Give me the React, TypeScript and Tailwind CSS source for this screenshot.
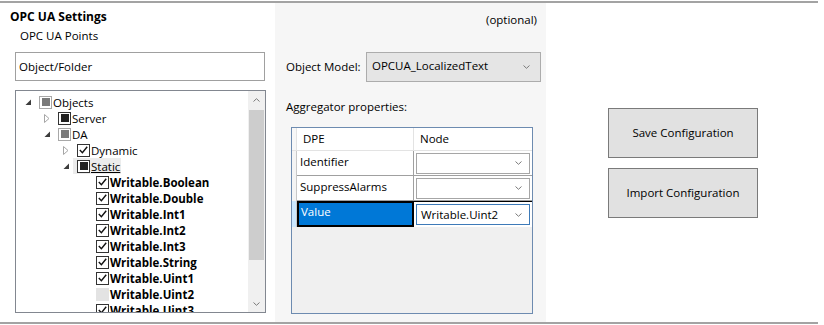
import React from 'react';

type Check = 'check' | 'grayInd' | 'blackInd' | 'disabled';
type Expander = 'open' | 'closed' | null;

interface TreeRow {
  level: number;
  expander: Expander;
  check: Check;
  label: string;
  bold?: boolean;
  selected?: boolean;
}

const rows: TreeRow[] = [
  { level: 0, expander: 'open', check: 'grayInd', label: 'Objects' },
  { level: 1, expander: 'closed', check: 'blackInd', label: 'Server' },
  { level: 1, expander: 'open', check: 'grayInd', label: 'DA' },
  { level: 2, expander: 'closed', check: 'check', label: 'Dynamic' },
  { level: 2, expander: 'open', check: 'blackInd', label: 'Static', selected: true },
  { level: 3, expander: null, check: 'check', label: 'Writable.Boolean', bold: true },
  { level: 3, expander: null, check: 'check', label: 'Writable.Double', bold: true },
  { level: 3, expander: null, check: 'check', label: 'Writable.Int1', bold: true },
  { level: 3, expander: null, check: 'check', label: 'Writable.Int2', bold: true },
  { level: 3, expander: null, check: 'check', label: 'Writable.Int3', bold: true },
  { level: 3, expander: null, check: 'check', label: 'Writable.String', bold: true },
  { level: 3, expander: null, check: 'check', label: 'Writable.Uint1', bold: true },
  { level: 3, expander: null, check: 'disabled', label: 'Writable.Uint2', bold: true },
  { level: 3, expander: null, check: 'check', label: 'Writable.Uint3', bold: true },
];

const indent = ['pl-[3px]', 'pl-[22px]', 'pl-[41px]', 'pl-[60px]'];

const Chevron = ({ up = false }: { up?: boolean }) => (
  <svg width="7" height="4" viewBox="0 0 7 4" className={up ? 'rotate-180' : ''}>
    <path d="M0.5 0.5 L3.5 3.3 L6.5 0.5" fill="none" stroke="#7a7a7a" strokeWidth="1" />
  </svg>
);

const ExpanderGlyph = ({ kind }: { kind: Expander }) => {
  if (kind === 'open')
    return (
      <svg width="7" height="7" viewBox="0 0 7 7">
        <path d="M6 0.5 L6 6 L0.5 6 Z" fill="#3c3c3c" />
      </svg>
    );
  if (kind === 'closed')
    return (
      <svg width="6" height="9" viewBox="0 0 6 9">
        <path d="M0.5 0.5 L5 4.5 L0.5 8.5 Z" fill="none" stroke="#a6a6a6" strokeWidth="1" />
      </svg>
    );
  return null;
};

const CheckBox = ({ kind }: { kind: Check }) => {
  if (kind === 'check')
    return (
      <span className="w-[13px] h-[13px] border border-[#333333] bg-white flex items-center justify-center shrink-0">
        <svg width="9" height="8" viewBox="0 0 9 8">
          <path d="M0.8 4 L3.4 6.8 L8.2 0.8" fill="none" stroke="#111111" strokeWidth="1.4" />
        </svg>
      </span>
    );
  if (kind === 'grayInd')
    return (
      <span className="w-[13px] h-[13px] border border-[#a8a8a8] bg-white flex items-center justify-center shrink-0">
        <span className="w-[8px] h-[8px] bg-[#7a7a7a]" />
      </span>
    );
  if (kind === 'blackInd')
    return (
      <span className="w-[13px] h-[13px] border border-[#333333] bg-white flex items-center justify-center shrink-0">
        <span className="w-[8px] h-[8px] bg-[#222222]" />
      </span>
    );
  return <span className="w-[13px] h-[13px] bg-[#e3e3e3] shrink-0" />;
};

const Tree = () => (
  <div className="ml-[15px] mt-[9px] w-[251px] h-[223px] border border-[#828790] bg-white flex overflow-hidden">
    <div className="flex-1 pt-[3px] overflow-hidden">
      {rows.map((r) => (
        <div key={r.label} className={`h-[16px] flex items-center whitespace-nowrap ${indent[r.level]}`}>
          <span className="w-[20px] pl-[6px] flex items-center">
            <ExpanderGlyph kind={r.expander} />
          </span>
          <span className={`flex items-center h-[16px] ${r.selected ? 'bg-[#ececec] -ml-[4px] pl-[4px] pr-[1px]' : ''}`}>
            <CheckBox kind={r.check} />
            <span className={`ml-px leading-[15px] ${r.bold ? 'font-bold' : ''} ${r.selected ? 'underline' : ''}`}>
              {r.label}
            </span>
          </span>
        </div>
      ))}
    </div>
    <div className="w-[17px] bg-[#f0f0f0] flex flex-col">
      <div className="h-[17px] flex items-center justify-center">
        <Chevron up />
      </div>
      <div className="mt-[2px] h-[150px] mx-[1px] bg-[#cdcdcd]" />
      <div className="flex-1" />
      <div className="h-[17px] flex items-center justify-center">
        <Chevron />
      </div>
    </div>
  </div>
);

const ComboCell = ({ value, focused = false }: { value?: string; focused?: boolean }) => (
  <div
    className={`mx-[2px] h-[21px] bg-white flex items-center justify-between pl-[4px] pr-[7px] border ${
      focused ? 'border-[#3d7ab8]' : 'border-[#a6a6a6]'
    }`}
  >
    <span>{value}</span>
    <Chevron />
  </div>
);

const Grid = () => (
  <div className="ml-[16px] mt-[13px] w-[242px] h-[187px] border border-[#6d8bb0] bg-[#f0f0f0]">
    <div className="h-[23px] flex bg-white border-b border-[#e3e3e3]">
      <div className="w-[5px] bg-[#f7f7f7] border-r border-[#e3e3e3]" />
      <div className="w-[117px] pl-[6px] flex items-center border-r border-[#e3e3e3]">DPE</div>
      <div className="flex-1 pl-[6px] flex items-center">Node</div>
    </div>
    {[
      { dpe: 'Identifier' },
      { dpe: 'SuppressAlarms' },
      { dpe: 'Value', node: 'Writable.Uint2', selected: true },
    ].map((row) => (
      <div key={row.dpe} className={`flex ${row.selected ? 'h-[26px]' : 'h-[25px]'}`}>
        <div
          className={`w-[5px] border-r border-[#c8c8c8] ${
            row.selected ? 'bg-[#cce8ff]' : 'bg-[#f4f4f4]'
          }`}
        />
        {row.selected ? (
          <div className="w-[117px] bg-[#0078d7] border-2 border-black text-white pl-[2px] pt-[1px] leading-[15px]">
            {row.dpe}
          </div>
        ) : (
          <div className="w-[117px] bg-white border-b border-r border-[#a0a0a0] pl-[3px] pt-[3px] leading-[15px]">
            {row.dpe}
          </div>
        )}
        <div className={`flex-1 bg-white flex items-center ${row.selected ? 'border-t border-black' : 'border-b border-[#a0a0a0]'}`}>
          <div className="flex-1">
            <ComboCell value={row.node} focused={row.selected} />
          </div>
        </div>
      </div>
    ))}
  </div>
);

export default function App() {
  return (
    <div className="w-[824px] h-[325px] bg-white font-['Open_Sans',sans-serif] text-[11.5px] text-black overflow-hidden">
      <div className="w-[818px] h-[2px] mt-px bg-[#a3a3a3]" />
      <div className="flex w-[818px] h-[319px]">
        {/* Left: points */}
        <div className="w-[275px]">
          <div className="pl-[10px] pt-[6px] leading-[15px] font-bold text-[12px]">OPC UA Settings</div>
          <div className="pl-[20px] mt-[4px] leading-[15px]">OPC UA Points</div>
          <div className="ml-[15px] mt-[9px] w-[250px] h-[29px] border border-[#a0a0a0] bg-white flex items-center pl-[3px]">
            Object/Folder
          </div>
          <Tree />
        </div>

        {/* Middle: object model */}
        <div className="w-[271px] bg-[#f6f6f6]">
          <div className="text-right pr-[9px] pt-[9px] leading-[15px]">(optional)</div>
          <div className="mt-[25px] flex items-center pl-[11px]">
            <span className="w-[80px]">Object Model:</span>
            <div className="w-[175px] h-[30px] bg-[#e5e5e5] border border-[#acacac] flex items-center justify-between pl-[5px] pr-[10px]">
              <span className="-mt-[2px]">OPCUA_LocalizedText</span>
              <Chevron />
            </div>
          </div>
          <div className="mt-[17px] pl-[11px] leading-[15px]">Aggregator properties:</div>
          <Grid />
        </div>

        {/* Right: actions */}
        <div className="flex-1 pl-[62px] pt-[105px] flex flex-col gap-[10px]">
          <button className="w-[150px] h-[50px] bg-[#e1e1e1] border border-[#7a7a7a]">Save Configuration</button>
          <button className="w-[150px] h-[50px] bg-[#e1e1e1] border border-[#7a7a7a]">Import Configuration</button>
        </div>
      </div>
      <div className="w-[818px] h-[2px] bg-[#a3a3a3]" />
    </div>
  );
}
